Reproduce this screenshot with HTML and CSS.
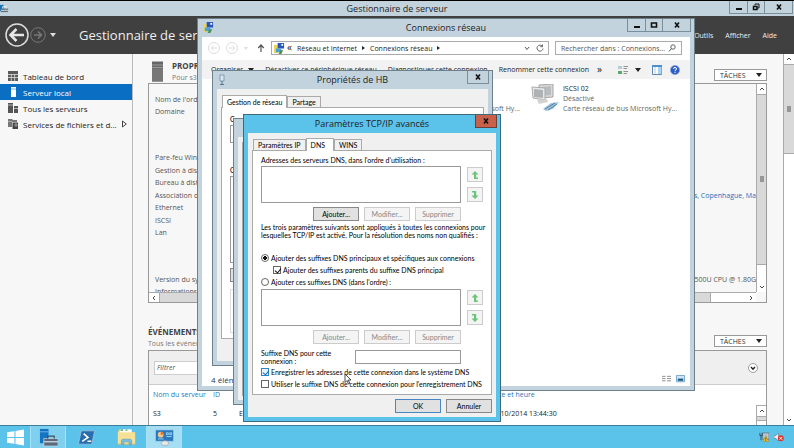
FILE: index.html
```html
<!DOCTYPE html>
<html lang="fr">
<head>
  <meta charset="UTF-8" />
  <title>Gestionnaire de serveur</title>
  <link rel="stylesheet" href="styles.css">
</head>
<body>
  <div class="desktop">
    <!-- Server manager -->
    <header class="manager-title">
      <svg class="manager-icon" viewBox="0 0 10 10"><path d="M0 1h4v7H0z" fill="#1b76b8"/><path d="M1 5h8v4H1z" fill="#5d7078"/><path d="M3 5V3h4v2" fill="none" stroke="#eef3f6"/><path d="M1 7h8" stroke="#dde5ea"/></svg>
      <h1>Gestionnaire de serveur</h1>
      <div class="caption">
        <button aria-label="Réduire"><svg viewBox="0 0 8 8"><path d="M1 6h6" stroke="#111" stroke-width="2"/></svg></button>
        <button aria-label="Restaurer"><svg viewBox="0 0 8 8"><path d="M3 2.500V1h4v4H5.500" fill="none" stroke="#111"/><path d="M1.500 3.500h3.500v3H1.500z" fill="none" stroke="#111" stroke-width="1.500"/></svg></button>
        <button class="wide" aria-label="Fermer"><svg viewBox="0 0 8 8"><path d="M2 1.500l4 5M6 1.500l-4 5" stroke="#111" stroke-width="1.600"/></svg></button>
      </div>
    </header>
    <nav class="manager-bar">
      <button class="round" aria-label="Précédent"><svg viewBox="0 0 24 24"><circle cx="12" cy="12" r="11" fill="none" stroke="#ddd" stroke-width="1.500"/><path d="M19 12H6M11.500 6L5.500 12l6 6" fill="none" stroke="#e6e6e6" stroke-width="2.600"/></svg></button>
      <button class="round small" aria-label="Suivant"><svg viewBox="0 0 16 16"><circle cx="8" cy="8" r="7.300" fill="none" stroke="#777"/><path d="M4 8h7M8 4.500L11.500 8 8 11.500" fill="none" stroke="#777" stroke-width="1.600"/></svg></button>
      <span class="caret light"></span>
      <span class="crumb">Gestionnaire de serveur</span>
      <div class="menus">
        <a href="#">Outils</a>
        <a href="#">Afficher</a>
        <a href="#">Aide</a>
      </div>
    </nav>
    <div class="manager-body">
      <ul class="sidebar">
        <li><a href="#"><svg viewBox="0 0 10 10"><path d="M0 0h10v10H0z" fill="#5a5a5a"/><path d="M0 3.500h10M0 6.500h10M3.300 3v7M6.600 3v7" stroke="#ddd" stroke-width=".8"/></svg>Tableau de bord</a></li>
        <li class="selected"><a href="#"><svg viewBox="0 0 10 10"><path d="M3 0h5v10H3z" fill="#fff"/><path d="M3 2h5" stroke="#7ab4e3"/></svg>Serveur local</a></li>
        <li><a href="#"><svg viewBox="0 0 10 10"><path d="M0 0h5v10H0zM6 3h4v7H6z" fill="#555"/><path d="M0 2h5M6 5.500h4" stroke="#ccc" stroke-width=".8"/></svg>Tous les serveurs</a></li>
        <li><a href="#"><svg viewBox="0 0 10 10"><path d="M0 0h4l1 1h4v2H4v5H0z" fill="#777"/><path d="M4.500 3.500h5.500V10H4.500z" fill="#444"/><path d="M0 2.500h4M7 5h2v2H7z" stroke="#ccc" stroke-width=".6" fill="none"/></svg>Services de fichiers et d...<svg class="expand" viewBox="0 0 5 8"><path d="M.5 1v6L4.300 4z" fill="none" stroke="#444"/></svg></a></li>
      </ul>
      <main class="content">
        <section class="card">
          <div class="card-head">
            <svg class="server" viewBox="0 0 11 20"><path d="M0 0h11v20H0z" fill="#666"/><path d="M0 3.500h11M0 6h11" stroke="#aaa" stroke-width=".8"/><path d="M0 7h11v13H0z" fill="#777"/></svg>
            <div>
              <h2>PROPRIÉTÉS</h2>
              <p>Pour s3</p>
            </div>
            <button class="tasks">TÂCHES <span class="caret"></span></button>
          </div>
          <div class="props">
            <div class="props-view">
              <dl>
                <dt>Nom de l'ordinateur</dt>
                <dt>Domaine</dt>
              </dl>
              <dl class="network">
                <dt>Pare-feu Windows</dt>
                <dt>Gestion à distance</dt>
                <dt>Bureau à distance</dt>
                <dt>Association de cartes</dt><dd><a href="#">Bruxelles, Copenhague, Ma</a></dd>
                <dt>Ethernet</dt>
                <dt>ISCSI</dt>
                <dt>Lan</dt>
              </dl>
              <dl>
                <dt>Version du système</dt><dd>Intel(R) i7-3500U CPU @ 1.80G</dd>
                <dt>Informations</dt>
              </dl>
            </div>
            <div class="vscroll">
              <span class="arrow"><svg viewBox="0 0 6 6"><path d="M1 4l2-2 2 2" fill="none" stroke="#444"/></svg></span>
              <span class="thumb"><svg viewBox="0 0 6 6"><path d="M1 1h4M1 3h4M1 5h4" stroke="#555"/></svg></span>
              <span class="arrow"><svg viewBox="0 0 6 6"><path d="M1 2l2 2 2-2" fill="none" stroke="#444"/></svg></span>
            </div>
            <div class="hscroll">
              <span class="arrow"><svg viewBox="0 0 6 6"><path d="M4 1L2 3l2 2" fill="none" stroke="#444"/></svg></span>
              <span class="thumb"></span>
              <span class="arrow"><svg viewBox="0 0 6 6"><path d="M2 1l2 2-2 2" fill="none" stroke="#444"/></svg></span>
            </div>
          </div>
        </section>
        <section class="card events">
          <div class="card-head">
            <div>
              <h2>ÉVÉNEMENTS</h2>
              <p>Tous les événements</p>
            </div>
            <button class="tasks">TÂCHES <span class="caret"></span></button>
          </div>
          <div class="events-box">
            <div class="filter">
              <input type="text" placeholder="Filtrer" aria-label="Filtrer">
              <button class="more" aria-label="Développer"><svg viewBox="0 0 10 10"><circle cx="5" cy="5" r="4.500" fill="#fff" stroke="#888" stroke-width=".8"/><path d="M3 4l2 2.200L7 4" fill="none" stroke="#222" stroke-width="1.400"/></svg></button>
            </div>
            <div class="events-list">
              <table>
                <tr><th>Nom du serveur</th><th>ID</th><th></th><th>Date et heure</th></tr>
                <tr><td>S3</td><td>5</td><td>Erreur</td><td>02/10/2014 13:44:30</td></tr>
              </table>
              <div class="vscroll">
                <span class="arrow"><svg viewBox="0 0 6 6"><path d="M1 4l2-2 2 2" fill="none" stroke="#444"/></svg></span>
                <span class="thumb"></span>
              </div>
            </div>
          </div>
        </section>
      </main>
      <div class="vscroll page">
        <span class="arrow"><svg viewBox="0 0 6 6"><path d="M1 4l2-2 2 2" fill="none" stroke="#444"/></svg></span>
        <span class="thumb"><svg viewBox="0 0 6 6"><path d="M1 1h4M1 3h4M1 5h4" stroke="#555"/></svg></span>
        <span class="arrow"><svg viewBox="0 0 6 6"><path d="M1 2l2 2 2-2" fill="none" stroke="#444"/></svg></span>
      </div>
    </div>

    <!-- Network connections -->
    <div class="window connections">
      <div class="titlebar">
        <svg class="app" viewBox="0 0 12 12"><path d="M0 2h5v9H0z" fill="#e8d75a"/><path d="M4 0h7v6H4z" fill="#2b55b8"/><path d="M8 1h2v2H8z" fill="#fff"/><path d="M2 6h6v4H2z" fill="#49a0dd"/><path d="M7 8h3l-2 4H5z" fill="#4d8f55"/></svg>
        <h2>Connexions réseau</h2>
        <div class="caption">
          <button aria-label="Réduire"><svg viewBox="0 0 8 8"><path d="M1 6h6" stroke="#111" stroke-width="2"/></svg></button>
          <button aria-label="Agrandir"><svg viewBox="0 0 8 8"><path d="M1.500 2h5v4h-5z" fill="none" stroke="#111" stroke-width="1.600"/></svg></button>
          <button class="wide" aria-label="Fermer"><svg viewBox="0 0 8 8"><path d="M2 1.500l4 5M6 1.500l-4 5" stroke="#111" stroke-width="1.600"/></svg></button>
        </div>
      </div>
      <div class="client">
        <div class="address-row">
          <svg class="nav" viewBox="0 0 12 12"><circle cx="6" cy="6" r="5.500" fill="none" stroke="#ddd"/><path d="M9 6H3M5.500 3.500L3 6l2.500 2.500" fill="none" stroke="#ddd"/></svg>
          <svg class="nav" viewBox="0 0 12 12"><circle cx="6" cy="6" r="5.500" fill="none" stroke="#ddd"/><path d="M3 6h6M6.500 3.500L9 6 6.500 8.500" fill="none" stroke="#ddd"/></svg>
          <span class="caret faint"></span>
          <svg class="up" viewBox="0 0 8 8"><path d="M4 8V1M1.200 4L4 1l2.800 3" fill="none" stroke="#555" stroke-width="1.200"/></svg>
          <div class="address">
            <svg class="app" viewBox="0 0 12 12"><path d="M0 2h5v9H0z" fill="#e8d75a"/><path d="M4 0h7v6H4z" fill="#2b55b8"/><path d="M8 1h2v2H8z" fill="#fff"/><path d="M2 6h6v4H2z" fill="#49a0dd"/><path d="M7 8h3l-2 4H5z" fill="#4d8f55"/></svg>
            <span class="overflow">«</span>
            <a href="#">Réseau et Internet</a>
            <span class="chevron"></span>
            <a href="#">Connexions réseau</a>
            <span class="chevron"></span>
            <svg class="drop" viewBox="0 0 8 8"><path d="M2 3l2 2.500L6 3" fill="none" stroke="#555"/></svg>
            <svg class="refresh" viewBox="0 0 8 8"><path d="M6.300 2.200A3 3 0 1 0 7 4.500M6.500.5v2.200H4.300" fill="none" stroke="#555" stroke-width=".9"/></svg>
          </div>
          <div class="search">
            <input type="text" placeholder="Rechercher dans : Connexions..." aria-label="Rechercher">
            <svg viewBox="0 0 8 8"><circle cx="5" cy="3" r="2.200" fill="none" stroke="#555" stroke-width=".9"/><path d="M3.500 4.500L1 7.500" stroke="#555"/></svg>
          </div>
        </div>
        <div class="commands">
          <button>Organiser <span class="caret"></span></button>
          <button>Désactiver ce périphérique réseau</button>
          <button>Diagnostiquer cette connexion</button>
          <button>Renommer cette connexion</button>
          <span class="overflow">»</span>
          <svg class="view" viewBox="0 0 10 10"><path d="M0 1h4v3H0z" fill="#b8cad8"/><path d="M0 6h4v3H0z" fill="#5aa86a"/><path d="M5.500 1.500H10M5.500 3.500H9M5.500 6.500H10M5.500 8.500H9" stroke="#777" stroke-width=".8"/></svg>
          <span class="caret"></span>
          <svg class="pane" viewBox="0 0 10 10"><path d="M.5.5h9v9h-9z" fill="#fff" stroke="#5a88b0"/><path d="M0 1h10" stroke="#4b8fd0" stroke-width="2"/><path d="M3 2v7" stroke="#9bb4c8" stroke-width=".7"/><path d="M6 2h3.500v7H6z" fill="#a9d1f2"/></svg>
          <svg class="help" viewBox="0 0 10 10"><circle cx="5" cy="5" r="4.600" fill="#2c5fc4" stroke="#8ba6d8" stroke-width=".8"/><path d="M3.500 4q0-1.600 1.500-1.600T6.500 4Q6.500 5 5 5.500v.8M5 7v1" fill="none" stroke="#fff"/></svg>
        </div>
        <div class="adapters">
          <div class="adapter first">
            <p>ISCSI 01</p>
            <p class="muted">Désactivé</p>
            <p class="muted">Carte réseau de bus Microsoft Hy...</p>
          </div>
          <div class="adapter">
            <svg viewBox="0 0 28 28"><path d="M8 1l14-1v13l-13 1z" fill="#d9d9d9" stroke="#a5a5a5"/><path d="M10 3l10-1v9l-10 1z" fill="#b9bcbf"/><path d="M1 3l13 1v12L2 14z" fill="#e8e8e8" stroke="#aaa"/><path d="M3 5l9 1v8l-9-1z" fill="#aeb2b5"/><path d="M6 16l10-1 1 3-9 2z" fill="#d2d2d2"/><path d="M12 25l8-6 8-1-6 7-7 2z" fill="#a3c4dc"/><path d="M14 25l10-6M17 26l9-6" stroke="#4b83ac" fill="none"/></svg>
            <div>
              <p>ISCSI 02</p>
              <p class="muted">Désactivé</p>
              <p class="muted">Carte réseau de bus Microsoft Hy...</p>
            </div>
          </div>
        </div>
        <div class="status">
          <span>4 élément(s)</span>
          <svg viewBox="0 0 10 8"><path d="M0 1.500h4M5.500 1.500H10M0 4h4M5.500 4H10M0 6.500h4M5.500 6.500H10" stroke="#888"/></svg>
          <svg viewBox="0 0 10 8"><path d="M.5.500h9v7h-9z" fill="#cfe6f5" stroke="#6ba0c5"/><path d="M2 4h6v2.500H2z" fill="#1e5a86"/></svg>
        </div>
      </div>
    </div>

    <!-- Adapter properties -->
    <div class="window properties">
      <div class="titlebar">
        <svg class="plug" viewBox="0 0 8 12"><path d="M2 1h4v6H2z" fill="#d8e8f2" stroke="#6d8ea5" stroke-width=".8"/><path d="M4 7v3M2 10.500h4" stroke="#55778e"/></svg>
        <h2>Propriétés de HB</h2>
        <div class="caption"><button class="close" aria-label="Fermer"><svg viewBox="0 0 8 8"><path d="M2 1.500l4 5M6 1.500l-4 5" stroke="#111" stroke-width="1.600"/></svg></button></div>
      </div>
      <div class="client dialog">
        <div class="tabs" role="tablist">
          <button class="active" role="tab">Gestion de réseau</button>
          <button role="tab">Partage</button>
        </div>
        <div class="sheet">
          <p>Connexion en utilisant :</p>
          <div class="listbox adapter-name"></div>
          <p>Cette connexion utilise :</p>
          <div class="listbox elements"></div>
          <button class="push">Installer...</button>
          <div class="group"></div>
        </div>
      </div>
    </div>

    <!-- IPv4 properties, almost entirely covered -->
    <div class="window ipv4">
      <div class="titlebar"></div>
      <div class="client dialog">
        <div class="sheet"></div>
      </div>
    </div>

    <!-- Advanced TCP/IP settings -->
    <div class="window tcpip">
      <div class="titlebar">
        <h2>Paramètres TCP/IP avancés</h2>
        <div class="caption"><button class="close" aria-label="Fermer"><svg viewBox="0 0 8 8"><path d="M2 1.500l4 5M6 1.500l-4 5" stroke="#111" stroke-width="1.600"/></svg></button></div>
      </div>
      <form class="client dialog">
        <div class="tabs" role="tablist">
          <button type="button" role="tab">Paramètres IP</button>
          <button type="button" class="active" role="tab">DNS</button>
          <button type="button" role="tab">WINS</button>
        </div>
        <div class="sheet">
          <p>Adresses des serveurs DNS, dans l'ordre d'utilisation :</p>
          <div class="list-row">
            <div class="listbox"></div>
            <div class="movers">
              <button type="button" aria-label="Monter"><svg viewBox="0 0 8 8"><path d="M4 0l3.500 3.500H5.200V6.500H7V8H3V3.500H.5z" fill="#6cc47c"/></svg></button>
              <button type="button" aria-label="Descendre"><svg viewBox="0 0 8 8"><path d="M4 8l3.500-3.500H5.200V0H1v1.500h2v3H.5z" fill="#6cc47c"/></svg></button>
            </div>
          </div>
          <div class="actions">
            <button type="button" class="push">Ajouter...</button>
            <button type="button" class="push" disabled>Modifier...</button>
            <button type="button" class="push" disabled>Supprimer</button>
          </div>
          <p class="note">Les trois paramètres suivants sont appliqués à toutes les connexions pour lesquelles TCP/IP est activé. Pour la résolution des noms non qualifiés :</p>
          <label><input type="radio" name="suffix" checked>Ajouter des suffixes DNS principaux et spécifiques aux connexions</label>
          <label class="nested"><input type="checkbox" checked>Ajouter des suffixes parents du suffixe DNS principal</label>
          <label><input type="radio" name="suffix">Ajouter ces suffixes DNS (dans l'ordre) :</label>
          <div class="list-row">
            <div class="listbox"></div>
            <div class="movers">
              <button type="button" aria-label="Monter"><svg viewBox="0 0 8 8"><path d="M4 0l3.500 3.500H5.200V6.500H7V8H3V3.500H.5z" fill="#6cc47c"/></svg></button>
              <button type="button" aria-label="Descendre"><svg viewBox="0 0 8 8"><path d="M4 8l3.500-3.500H5.200V0H1v1.500h2v3H.5z" fill="#6cc47c"/></svg></button>
            </div>
          </div>
          <div class="actions">
            <button type="button" class="push" disabled>Ajouter...</button>
            <button type="button" class="push" disabled>Modifier...</button>
            <button type="button" class="push" disabled>Supprimer</button>
          </div>
          <div class="suffix">
            <label for="suffixInput">Suffixe DNS pour cette connexion :</label>
            <input type="text" id="suffixInput">
          </div>
          <label><input type="checkbox" class="hot" checked>Enregistrer les adresses de cette connexion dans le système DNS</label>
          <label><input type="checkbox">Utiliser le suffixe DNS de cette connexion pour l'enregistrement DNS</label>
        </div>
        <div class="footer">
          <button type="button" class="push default">OK</button>
          <button type="button" class="push">Annuler</button>
        </div>
      </form>
    </div>

    <svg class="pointer" viewBox="0 0 8 12"><path d="M1 1v8.500l2-2 1.500 3.500 1.300-.6L4.300 7H7z" fill="#fff" stroke="#222" stroke-width=".8"/></svg>

    <footer class="taskbar">
      <button aria-label="Démarrer"><svg viewBox="0 0 18 18"><path d="M1 4l7-1v5.600H1zM9 2.800L17 1.500v7.100H9zM1 9.500h7V15l-7-1zM9 9.500h8v7l-8-1.300z" fill="#fff"/></svg></button>
      <button class="open" aria-label="Gestionnaire de serveur"><svg viewBox="0 0 20 20"><path d="M1 1h9v15H1z" fill="#1573c4"/><path d="M1 4h9" stroke="#6db7ee"/><path d="M5 11h15v8H5z" fill="#5b6b7b" stroke="#d7e3ec" stroke-width=".7"/><path d="M9 11V8.500h7V11" fill="none" stroke="#44525f" stroke-width="1.300"/><path d="M5 14.500h15" stroke="#dbe4ea" stroke-width="1.200"/></svg></button>
      <button aria-label="PowerShell"><svg viewBox="0 0 20 20"><path d="M4.500 3h14L15.500 17h-14z" fill="#2a6dad" stroke="#a8cce6" stroke-width=".7"/><path d="M7 6l4.500 4L5.500 14M11 14h4" fill="none" stroke="#fff" stroke-width="1.700"/></svg></button>
      <button aria-label="Explorateur"><svg viewBox="0 0 22 20"><path d="M1 3h7l1.500 2H21v14H1z" fill="#e9c862"/><path d="M3 1.500h14V6H3z" fill="#fff"/><path d="M4 2.500h3M10 2.500h2" stroke="#4a9b58" stroke-width="1.500"/><path d="M1 5h20v13H1z" fill="#f5e096"/><path d="M5 19v-4q0-2 2-2h8q2 0 2 2v4h-3v-3H8v3z" fill="#78c0e2" stroke="#4b93ba" stroke-width=".6"/></svg></button>
      <button class="open active" aria-label="Panneau de configuration"><svg viewBox="0 0 20 20"><path d="M.5 2h19v12H.5z" fill="#2878bd" stroke="#a7d2ee" stroke-width=".7"/><circle cx="6" cy="7" r="3" fill="#f4c58a"/><path d="M6 7V4a3 3 0 0 1 3 3z" fill="#e2722d"/><path d="M12 5h2v2h-2zM15.500 5h2v2h-2zM12 9h5.500M3 11.500h6" fill="none" stroke="#a9dcf6" stroke-width=".9"/><ellipse cx="10.500" cy="16" rx="4" ry="2.600" fill="#e5e8ea" stroke="#8a979f" stroke-width=".6"/></svg></button>
      <div class="tray">
        <svg viewBox="0 0 11 11"><path d="M4 1h7v7H4z" fill="#b9c9d2" stroke="#567" stroke-width=".7"/><path d="M1 1v3h2.500V1M2.200 4v5" fill="none" stroke="#345" /><path d="M7.500 4l3.200 6.500H4.300z" fill="#f6c52e" stroke="#a77b10" stroke-width=".5"/><path d="M7.500 6v2.500M7.500 9v.8" stroke="#222" stroke-width=".8"/></svg>
        <svg viewBox="0 0 11 11"><path d="M0 4h2l3-3v9L2 7H0z" fill="#eef3f6" stroke="#667" stroke-width=".6"/><circle cx="7.500" cy="7" r="3.300" fill="#d8392f"/><path d="M6 5.500l3 3M9 5.500l-3 3" stroke="#fff"/></svg>
      </div>
    </footer>
  </div>
</body>
</html>
```
FILE: styles.css
```css
* {
  box-sizing: border-box;
}
body {
  margin: 0;
  background: #000;
  font-family: "Open Sans", sans-serif;
  font-size: 7px;
  color: #222;
}
h1, h2, p, ul, dl, dd {
  margin: 0;
  padding: 0;
}
a {
  color: inherit;
  text-decoration: none;
}
button, input {
  font: inherit;
  color: inherit;
  margin: 0;
  padding: 0;
}
button {
  border: none;
  background: none;
}
svg {
  display: block;
  flex: none;
}
.desktop {
  position: relative;
  display: flex;
  flex-direction: column;
  height: 100vh;
  overflow: hidden;
  padding-top: 1px;
}
.caret {
  flex: none;
  border: 3px solid transparent;
  border-top: 4px solid #222;
  border-bottom: none;
}
.caret.light {
  border-top-color: #ddd;
}
.caret.faint {
  border-top-color: #ddd;
  border-width: 3px 2px 0;
}

/* server manager */
.manager-title, .titlebar {
  position: relative;
  display: flex;
  align-items: center;
  justify-content: center;
  background: #c2d3de;
}
.manager-title {
  height: 15px;
}
.manager-icon {
  position: absolute;
  left: 0;
  width: 9px;
}
h1, .titlebar h2 {
  font-size: 9px;
  line-height: 12px;
  font-weight: normal;
  color: #222;
}
.caption {
  position: absolute;
  top: 0;
  right: 1px;
  display: flex;
  border: 1px solid #7b8f9b;
  border-top: none;
}
.caption button {
  display: grid;
  place-items: center;
  width: 17px;
  height: 12px;
}
.caption button + button {
  border-left: 1px solid #7b8f9b;
}
.caption .wide {
  width: 28px;
}
.caption .close {
  width: 20px;
}
.caption svg {
  width: 8px;
}
.manager-bar {
  display: flex;
  align-items: center;
  height: 38px;
  padding: 0 17px 0 5px;
  background: #404040;
  color: #eee;
}
.round svg {
  width: 24px;
}
.round.small {
  margin: 0 4px 0 1px;
}
.round.small svg {
  width: 16px;
}
.crumb {
  margin-left: 23px;
  font-size: 13px;
  line-height: 20px;
}
.menus {
  display: flex;
  gap: 12px;
  margin-left: auto;
}
.manager-body {
  flex: 1;
  display: flex;
  min-height: 0;
  background: #f7f7f7;
}
.sidebar {
  width: 133px;
  padding-top: 14px;
  border-right: 1px solid #bbb;
  list-style: none;
}
.sidebar a {
  display: flex;
  align-items: center;
  gap: 5px;
  height: 16px;
  padding-left: 8px;
  font-size: 8px;
}
.sidebar svg {
  width: 10px;
}
.sidebar .expand {
  width: 5px;
}
.sidebar .selected {
  background: #0a6fc2;
  color: #fff;
}
.content {
  flex: 1;
  display: flex;
  flex-direction: column;
  min-width: 0;
  padding: 6px 16px 0 15px;
}
.card-head {
  display: flex;
  gap: 9px;
  height: 23px;
  line-height: 11px;
  color: #777;
}
.card-head h2 {
  font-size: 8px;
  line-height: 12px;
  color: #444;
}
.server {
  width: 11px;
  margin-left: 4px;
}
.tasks {
  display: flex;
  align-items: center;
  justify-content: space-between;
  width: 53px;
  height: 12px;
  margin: 9px 0 0 auto;
  padding: 0 4px 0 5px;
  border: 1px solid #999;
  background: #fff;
  color: #333;
}
.props {
  display: grid;
  grid-template-columns: 1fr 10px;
  grid-template-rows: 208px 10px;
  border: 1px solid #999;
}
.props-view {
  overflow: hidden;
  padding: 10px 0 0 6px;
  color: #555;
}
.props dl {
  display: grid;
  grid-template-columns: 1fr auto;
  grid-auto-rows: 12px;
  line-height: 12px;
}
.props dt {
  grid-column: 1;
}
.props .network {
  grid-auto-rows: 1fr;
  height: 88px;
  margin: 34px 0;
}
.props dd a {
  color: #1a6fc0;
}
.vscroll, .hscroll {
  display: flex;
  background: #fff;
  border: 0 solid #aaa;
}
.vscroll {
  flex-direction: column;
  border-left-width: 1px;
}
.hscroll {
  border-top-width: 1px;
}
.vscroll svg, .hscroll svg {
  width: 6px;
}
.vscroll .arrow, .hscroll .arrow {
  display: grid;
  place-items: center;
  flex: 0 0 10px;
}
.thumb {
  display: grid;
  place-items: center;
  background: #d9d9d9;
  border: 1px solid #aaa;
}
.vscroll .thumb {
  flex: 0 0 82%;
  border-width: 1px 0;
}
.hscroll .thumb {
  flex: 0 0 91%;
  border-width: 0 1px;
}
.vscroll .arrow:last-child {
  margin-top: auto;
}
.hscroll .arrow:last-child {
  margin-left: auto;
}
.vscroll.page {
  width: 11px;
}
.page .thumb {
  flex-basis: 90px;
}
.events {
  flex: 1;
  display: flex;
  flex-direction: column;
  margin-top: 23px;
}
.events .card-head {
  height: 24px;
}
.events-box {
  flex: 1;
  border: 1px solid #999;
  border-bottom: none;
  background: #fff;
}
.filter {
  display: flex;
  align-items: center;
  justify-content: space-between;
  height: 34px;
  padding: 0 8px 0 5px;
  background: #efefef;
  border-bottom: 1px solid #ccc;
}
.filter input {
  width: 200px;
  height: 14px;
  padding: 0 2px;
  border: 1px solid #ccc;
  font-style: italic;
}
.more svg {
  width: 10px;
}
.events-list {
  display: flex;
  align-items: flex-start;
}
.events table {
  flex: 1;
  table-layout: fixed;
  border-collapse: collapse;
  font-size: 7px;
}
.events th, .events td {
  height: 19px;
  padding: 0 0 0 4px;
  text-align: left;
}
.events th {
  font-weight: normal;
  color: #2a78bd;
}
.events th:nth-child(1) {
  width: 60px;
}
.events th:nth-child(2) {
  width: 26px;
}
.events th:nth-child(3) {
  width: 251px;
}
.events .vscroll {
  width: 10px;
  height: 20px;
  margin-top: 20px;
  border-top-width: 1px;
}
.events .thumb {
  flex-basis: 5px;
}

/* windows */
.window {
  position: absolute;
  display: flex;
  flex-direction: column;
  padding: 0 4px 4px;
  border: 1px solid #6d808b;
  background: #c2d3de;
}
.window .titlebar {
  flex: none;
  height: 18px;
  background: none;
}
.window .caption {
  right: -1px;
}
.client {
  flex: 1;
  display: flex;
  flex-direction: column;
  min-height: 0;
  background: #fff;
}
.connections {
  left: 197px;
  top: 18px;
  width: 498px;
  height: 373px;
}
.properties {
  left: 212px;
  top: 70px;
  width: 281px;
  height: 296px;
}
.ipv4 {
  left: 233px;
  top: 118px;
  width: 260px;
  height: 287px;
}
.tcpip {
  left: 243px;
  top: 114px;
  width: 258px;
  height: 308px;
  background: #5bc2ea;
  border-color: #3c6b80;
}
.tcpip .close {
  background: #c9604c;
}
.tcpip .caption {
  border-color: #6b4038;
}

/* network connections */
.titlebar .app, .titlebar .plug {
  position: absolute;
  left: 1px;
  top: 3px;
  width: 11px;
}
.titlebar .plug {
  width: 8px;
}
.app {
  width: 11px;
}
.address-row {
  display: flex;
  align-items: center;
  gap: 6px;
  padding: 4px 8px 5px 6px;
}
.nav {
  width: 12px;
}
.up {
  width: 8px;
  margin-left: 3px;
}
.address, .search {
  display: flex;
  align-items: center;
  height: 14px;
  border: 1px solid #aaa;
}
.address {
  flex: 1;
  gap: 5px;
  padding: 0 4px 0 2px;
}
.overflow {
  font-size: 10px;
  line-height: 12px;
  margin-top: -2px;
}
.address .overflow {
  margin-left: -3px;
}
.chevron {
  border: 2px solid transparent;
  border-left: 3px solid #222;
  border-right: none;
}
.drop {
  width: 8px;
  margin-left: auto;
}
.refresh {
  width: 8px;
}
.search {
  width: 127px;
  padding: 0 5px;
}
.search input {
  flex: 1;
  min-width: 0;
  border: none;
}
input::placeholder {
  color: #555;
  opacity: 1;
}
.search svg {
  width: 8px;
}
.commands {
  display: flex;
  align-items: center;
  height: 19px;
  padding: 0 10px 0 9px;
  background: #f2f2f2;
  gap: 11px;
}
.commands button {
  display: flex;
  align-items: center;
  gap: 5px;
  white-space: nowrap;
}
.commands .overflow {
  margin-left: -3px;
}
.commands .view {
  width: 10px;
  margin-left: auto;
}
.commands .pane, .commands .help {
  width: 10px;
}
.commands .view + .caret {
  margin-left: -4px;
}
.commands .help {
  margin-left: -3px;
}
.adapters {
  flex: 1;
  display: flex;
  justify-content: flex-end;
  gap: 11px;
  padding: 5px 13px 0;
  line-height: 10px;
}
.adapter {
  display: flex;
  gap: 4px;
  color: #222;
}
.adapter.first {
  display: block;
}
.adapter svg {
  width: 28px;
  height: 28px;
}
.muted {
  color: #666;
}
.status {
  display: flex;
  align-items: center;
  gap: 5px;
  height: 14px;
  padding: 0 5px 0 9px;
  font-size: 8px;
  color: #1e3a5a;
}
.status span {
  margin-right: auto;
}
.status svg {
  width: 9px;
}

/* dialogs */
.dialog {
  padding: 5px 4px 4px;
  background: #f0f0f0;
  font-family: Lato, sans-serif;
  font-size: 7px;
  line-height: 8px;
  color: #000;
}
.tabs {
  display: flex;
  align-items: flex-end;
  height: 13px;
  padding-left: 1px;
}
.tabs button {
  height: 11px;
  padding: 0 4px;
  border: 1px solid #aaa;
  border-bottom: none;
}
.tabs .active {
  position: relative;
  height: 13px;
  margin-bottom: -1px;
  background: #fff;
}
.tcpip .tabs .active {
  padding: 0 8px 0 4px;
}
.sheet {
  flex: 1;
  display: flex;
  flex-direction: column;
  gap: 2px;
  padding: 5px 8px;
  border: 1px solid #aaa;
  background: #fff;
}
.listbox {
  border: 1px solid #999;
  background: #fff;
}
.list-row {
  display: grid;
  grid-template-columns: 1fr 16px;
  gap: 6px;
  height: 37px;
}
.movers {
  display: flex;
  flex-direction: column;
  justify-content: space-between;
  padding: 1px 0;
}
.movers button {
  display: grid;
  place-items: center;
  height: 15px;
  border: 1px solid #ccc;
  background: #f4f4f4;
}
.movers svg {
  width: 8px;
}
.push {
  width: 46px;
  height: 14px;
  border: 1px solid #888;
  background: #e1e1e1;
}
.push:disabled {
  border-color: #ccc;
  background: #f4f4f4;
  color: #888;
}
.push.default {
  border-color: #4a86c0;
}
.actions {
  display: flex;
  justify-content: flex-end;
  gap: 5px;
  margin: 2px 22px 0 0;
}
.note {
  margin: 0 -6px 12px 0;
}
.sheet label {
  display: flex;
  align-items: center;
  gap: 2px;
  white-space: nowrap;
}
.sheet > label {
  height: 10px;
}
.sheet .nested {
  padding-left: 12px;
}
input[type="radio"], input[type="checkbox"] {
  appearance: none;
  flex: none;
  width: 8px;
  height: 8px;
  border: 1px solid #666;
  background: #fff;
}
input[type="radio"] {
  border-radius: 50%;
}
input[type="radio"]:checked {
  background: radial-gradient(circle, #111 2px, #fff 2px);
}
input[type="checkbox"]:checked::before {
  content: "";
  display: block;
  width: 3px;
  height: 5px;
  margin: 0 0 0 2px;
  border: solid #111;
  border-width: 0 1px 1px 0;
  transform: rotate(40deg);
}
input.hot {
  border-color: #2a86c8;
  background: #e3f2fc;
}
input.hot:checked::before {
  border-color: #1a6fb0;
}
.suffix {
  display: flex;
  justify-content: space-between;
  margin: 3px 22px 0 0;
}
.sheet .suffix label {
  width: 80px;
  white-space: normal;
}
.suffix input {
  width: 106px;
  height: 14px;
  margin-top: 1px;
  border: 1px solid #999;
}
.footer {
  display: flex;
  justify-content: flex-end;
  gap: 5px;
  padding-top: 4px;
}
.properties .sheet {
  flex: none;
  height: 232px;
}
.properties .sheet p {
  margin-top: 2px;
}
.adapter-name {
  height: 18px;
  margin-bottom: 19px;
}
.elements {
  height: 88px;
  margin-bottom: 3px;
}
.group {
  height: 44px;
  margin-top: 5px;
  border: 1px solid #ddd;
}
.pointer {
  position: absolute;
  left: 344px;
  top: 373px;
  width: 8px;
}

/* taskbar */
.taskbar {
  display: flex;
  align-items: center;
  height: 23px;
  border-top: 1px solid #3d7e9a;
  background: #5bc2ea;
}
.taskbar button {
  display: grid;
  place-items: center;
  width: 40px;
  height: 22px;
}
.taskbar button:first-child {
  width: 30px;
}
.taskbar .open {
  width: 36px;
  background: #7fcfee;
  border: 0 solid #a8e0f5;
  border-width: 0 1px;
}
.taskbar .active {
  background: #a5def3;
}
.taskbar svg {
  width: 19px;
}
.tray {
  display: flex;
  gap: 5px;
  margin-left: auto;
  padding-right: 10px;
}
.taskbar .tray svg {
  width: 10px;
}
```
